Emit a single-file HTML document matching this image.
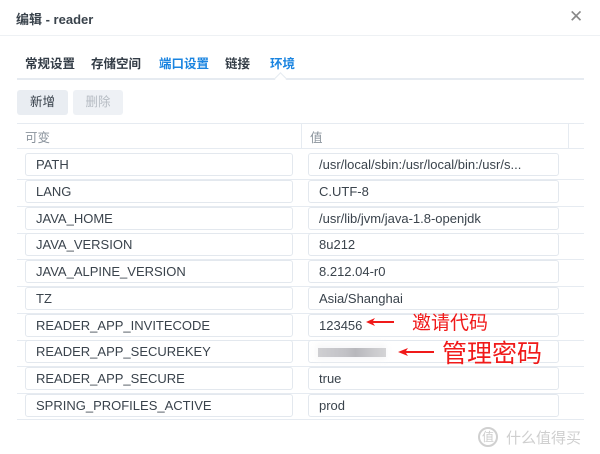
<!DOCTYPE html>
<html><head><meta charset="utf-8"><style>
*{margin:0;padding:0;box-sizing:border-box}
body{width:600px;height:454px;background:#fff;font-family:"Liberation Sans","Noto Sans CJK SC",sans-serif;position:relative;overflow:hidden;color:#414b55}
.a{position:absolute}
.box{position:absolute;height:23px;border:1px solid #e3e8ee;border-radius:3px;background:#fff;font-size:13px;line-height:21px;padding-left:10px;color:#3a434c;white-space:nowrap;overflow:hidden}
.line{position:absolute;left:17px;width:567px;height:1px;background:#e6ebf1}
.tab{position:absolute;top:53px;font-size:12.5px;font-weight:bold;color:#333c46}
</style></head><body>
<div class="a" style="left:16px;top:9px;font-size:13px;font-weight:bold;color:#3a434c">编辑 - reader</div>
<div class="a" style="left:569px;top:7px;font-size:17px;color:#888">✕</div>
<div class="a" style="left:0;top:35px;width:600px;height:1px;background:#eef1f4"></div>
<div class="tab" style="left:25px">常规设置</div>
<div class="tab" style="left:91px">存储空间</div>
<div class="tab" style="left:159px;color:#1a84e0">端口设置</div>
<div class="tab" style="left:225px">链接</div>
<div class="tab" style="left:270px;color:#1a84e0">环境</div>
<div class="a" style="left:17px;top:78px;width:567px;height:2px;background:#e6ebf1"></div>
<div class="a" style="left:276px;top:74px;width:9px;height:9px;background:#fff;border-left:1px solid #e6ebf1;border-top:1px solid #e6ebf1;transform:rotate(45deg)"></div>
<div class="a" style="left:17px;top:90px;width:51px;height:25px;background:#e9edf2;border-radius:3px;font-size:12.5px;line-height:25px;text-align:center;color:#333c46">新增</div>
<div class="a" style="left:73px;top:90px;width:50px;height:25px;background:#eef1f5;border-radius:3px;font-size:12.5px;line-height:25px;text-align:center;color:#b6bcc3">删除</div>
<div class="a" style="left:17px;top:123px;width:567px;height:26px;border-top:1px solid #e6ebf1;border-bottom:1px solid #e6ebf1"></div>
<div class="a" style="left:301px;top:123px;width:1px;height:26px;background:#e6ebf1"></div>
<div class="a" style="left:568px;top:123px;width:1px;height:26px;background:#e6ebf1"></div>
<div class="a" style="left:25px;top:127px;font-size:12.5px;color:#8a939c">可变</div>
<div class="a" style="left:310px;top:127px;font-size:12.5px;color:#8a939c">值</div>

<div class="box" style="left:25px;top:153px;width:268px">PATH</div><div class="box" style="left:308px;top:153px;width:251px">/usr/local/sbin:/usr/local/bin:/usr/s...</div><div class="line" style="top:179px"></div>
<div class="box" style="left:25px;top:180px;width:268px">LANG</div><div class="box" style="left:308px;top:180px;width:251px">C.UTF-8</div><div class="line" style="top:206px"></div>
<div class="box" style="left:25px;top:207px;width:268px">JAVA_HOME</div><div class="box" style="left:308px;top:207px;width:251px">/usr/lib/jvm/java-1.8-openjdk</div><div class="line" style="top:233px"></div>
<div class="box" style="left:25px;top:233px;width:268px">JAVA_VERSION</div><div class="box" style="left:308px;top:233px;width:251px">8u212</div><div class="line" style="top:259px"></div>
<div class="box" style="left:25px;top:260px;width:268px">JAVA_ALPINE_VERSION</div><div class="box" style="left:308px;top:260px;width:251px">8.212.04-r0</div><div class="line" style="top:286px"></div>
<div class="box" style="left:25px;top:287px;width:268px">TZ</div><div class="box" style="left:308px;top:287px;width:251px">Asia/Shanghai</div><div class="line" style="top:313px"></div>
<div class="box" style="left:25px;top:314px;width:268px">READER_APP_INVITECODE</div><div class="box" style="left:308px;top:314px;width:251px">123456</div><div class="line" style="top:340px"></div>
<div class="box" style="left:25px;top:340px;width:268px">READER_APP_SECUREKEY</div><div class="box" style="left:308px;top:340px;width:251px"></div><div class="line" style="top:366px"></div>
<div class="box" style="left:25px;top:367px;width:268px">READER_APP_SECURE</div><div class="box" style="left:308px;top:367px;width:251px">true</div><div class="line" style="top:393px"></div>
<div class="box" style="left:25px;top:394px;width:268px">SPRING_PROFILES_ACTIVE</div><div class="box" style="left:308px;top:394px;width:251px">prod</div><div class="line" style="top:419px"></div>

<div class="a" style="left:316px;top:344px;width:70px;height:16px;background:#f7f7f8;filter:blur(3px)"></div>
<div class="a" style="left:318px;top:348px;width:68px;height:9px;background:linear-gradient(90deg,#cfcfd2,#c2c2c6 40%,#b8b8bc 55%,#c9c9cc 80%,#d4d4d6)"></div>

<svg class="a" style="left:365px;top:317px" width="30" height="10"><path d="M1 5 L10 1 L8 4 L29 4 L29 6 L8 6 L10 9 Z" fill="#f01a1a"/></svg>
<div class="a" style="left:412px;top:308px;font-size:19px;color:#f01a1a;font-family:'Noto Sans CJK SC',sans-serif">邀请代码</div>
<svg class="a" style="left:397px;top:347px" width="38" height="10"><path d="M1 5 L11 1 L9 4 L37 4 L37 6 L9 6 L11 9 Z" fill="#f01a1a"/></svg>
<div class="a" style="left:442px;top:334px;font-size:25px;color:#f01a1a;font-family:'Noto Sans CJK SC',sans-serif">管理密码</div>

<div class="a" style="left:478px;top:427px;width:20px;height:20px;border:2px solid #d0d0d0;border-radius:50%;font-size:12px;line-height:16px;text-align:center;color:#ccc">值</div>
<div class="a" style="left:506px;top:427px;font-size:15px;color:#cfcfcf">什么值得买</div>
</body></html>
